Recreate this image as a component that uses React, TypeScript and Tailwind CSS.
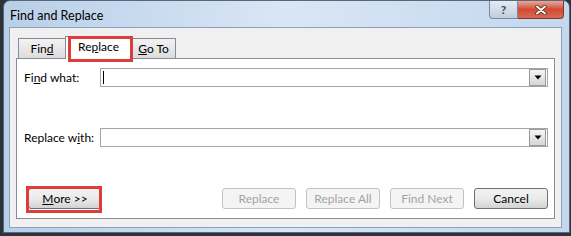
import React from 'react';

const font = { fontFamily: 'Lato, "Open Sans", sans-serif' };

function DropButton() {
  return (
    <div className="w-[17px] h-[17px] mr-px border border-[#9a9a9a] bg-gradient-to-b from-[#f6f6f6] to-[#d6d6d6] flex items-center justify-center">
      <svg width="8" height="5" viewBox="0 0 8 5">
        <path d="M0.5 0.5 L7.5 0.5 L4 4.5 Z" fill="#000" />
      </svg>
    </div>
  );
}

function Combo({ cursor }: { cursor?: boolean }) {
  return (
    <div className="flex-1 h-[19px] border border-[#a5a5a5] bg-white flex items-center justify-between">
      <div className="pl-[2px] flex items-center">
        {cursor && <div className="w-px h-[13px] bg-black" />}
      </div>
      <DropButton />
    </div>
  );
}

function Btn({ children, disabled }: { children: React.ReactNode; disabled?: boolean }) {
  return (
    <div
      className={`w-[74px] h-[21px] rounded-[3px] border flex items-center justify-center text-[12px] ${
        disabled
          ? 'border-[#bfc3c6] bg-[#f4f4f4] text-[#a3a3a3]'
          : 'border-[#707070] bg-gradient-to-b from-[#f2f2f2] via-[#ebebeb] to-[#d2d2d2] text-black'
      }`}
    >
      {children}
    </div>
  );
}

export default function App() {
  return (
    <div className="w-[571px] h-[236px] bg-[#2e333a] pl-[3px] pr-px pb-[3px]" style={font}>
      <div className="h-full rounded-t-[7px] border border-[#56687e] bg-gradient-to-r from-[#b9cfe8] via-[#d9e6f5] to-[#c4d7ee] flex flex-col px-[5px] pb-[4px]">
        {/* title bar */}
        <div className="h-[26px] flex items-start justify-between shrink-0">
          <span className="pt-[6px] pl-[1px] text-[12.5px] text-black">Find and Replace</span>
          <div className="flex">
            <div className="w-[29px] h-[18px] rounded-bl-[4px] border border-[#7a8aa0] border-t-0 bg-gradient-to-b from-[#e4ebf3] via-[#d3dce8] to-[#c0cddd] flex items-center justify-center text-[12px] text-[#3b4657] font-bold">
              ?
            </div>
            <div className="w-[46px] h-[18px] rounded-br-[4px] border border-[#7a3a30] border-t-0 border-l-0 bg-gradient-to-b from-[#e8a796] via-[#cf4a33] to-[#d86a50] flex items-center justify-center">
              <svg width="12" height="10" viewBox="0 0 12 10">
                <path d="M2 1.5 L10 8.5 M10 1.5 L2 8.5" stroke="#4a1c14" strokeWidth="3.4" strokeLinecap="round" />
                <path d="M2 1.5 L10 8.5 M10 1.5 L2 8.5" stroke="#ffffff" strokeWidth="2" strokeLinecap="round" />
              </svg>
            </div>
          </div>
        </div>

        {/* client area */}
        <div className="flex-1 mr-[2px] bg-[#f0f0f0] border border-[#8aa2bf] px-[6px] pt-[8px] pb-[8px] flex flex-col">
          {/* tabs */}
          <div className="h-[22px] flex items-end pl-[2px] shrink-0">
            <div className="w-[48px] h-[20px] border border-b-0 border-[#898c95] bg-gradient-to-b from-[#f3f3f3] to-[#dcdcdc] flex items-center justify-center text-[12px] text-black">
              Fin<span className="underline">d</span>
            </div>
            <div className="relative z-10 w-[67px] h-[23px] -mb-px -ml-px border border-b-0 border-[#898c95] bg-white flex items-center justify-center pb-[2px] text-[12px] text-black">
              Re<span className="underline">p</span>lace
              <div className="absolute left-[2px] top-[-1px] w-[65px] h-[26px] border-[3px] border-[#de3d3b]" />
            </div>
            <div className="w-[44px] h-[20px] border border-b-0 border-l-0 border-[#898c95] bg-gradient-to-b from-[#f3f3f3] to-[#dcdcdc] flex items-center justify-center text-[12px] text-black">
              <span className="underline">G</span>o To
            </div>
          </div>

          {/* panel */}
          <div className="flex-1 bg-white border border-[#898c95] pl-[7px] pr-[6px] pt-[9px] pb-[9px] flex flex-col">
            <div className="flex items-center">
              <div className="w-[76px] text-[12px] text-black">
                Fi<span className="underline">n</span>d what:
              </div>
              <Combo cursor />
            </div>
            <div className="flex items-center mt-[41px]">
              <div className="w-[76px] text-[12px] text-black">
                Replace w<span className="underline">i</span>th:
              </div>
              <Combo />
            </div>
            <div className="flex items-center justify-between mt-[41px]">
              <div className="relative ml-[4px]">
                <Btn>
                  <span className="underline">M</span>ore &gt;&gt;
                </Btn>
                <div className="absolute left-[-2px] top-[-2px] w-[76px] h-[27px] border-[3px] border-[#de3d3b]" />
              </div>
              <div className="flex gap-[10px]">
                <Btn disabled>Replace</Btn>
                <Btn disabled>Replace All</Btn>
                <Btn disabled>Find Next</Btn>
                <Btn>Cancel</Btn>
              </div>
            </div>
          </div>
        </div>
      </div>
    </div>
  );
}
